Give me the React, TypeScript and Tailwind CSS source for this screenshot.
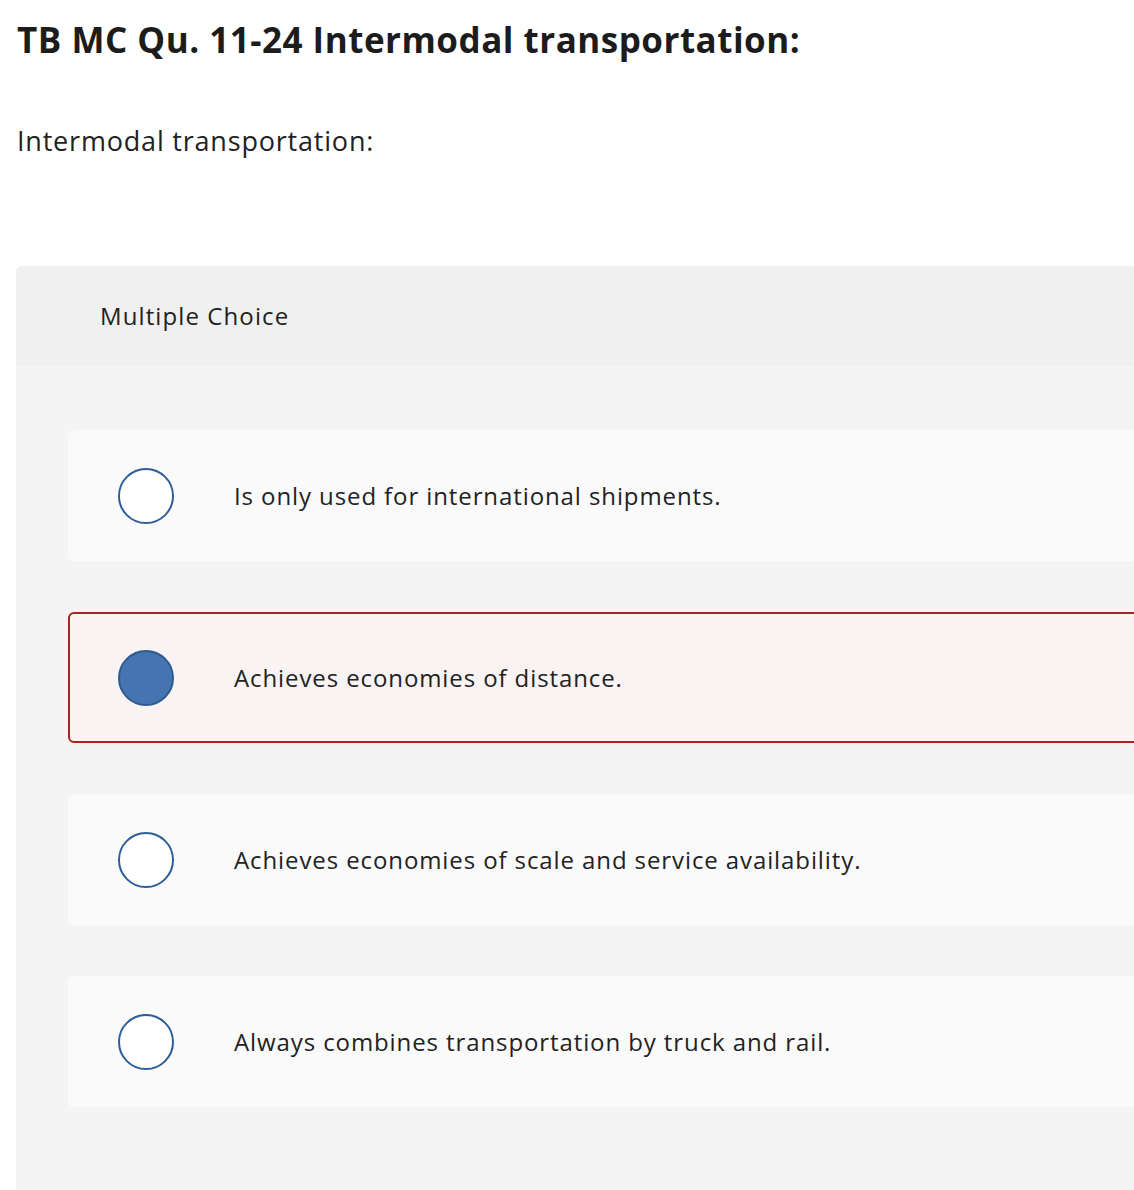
import React from "react"

const options = [
  { text: "Is only used for international shipments.", selected: false },
  { text: "Achieves economies of distance.", selected: true },
  { text: "Achieves economies of scale and service availability.", selected: false },
  { text: "Always combines transportation by truck and rail.", selected: false },
]

function Radio({ selected }: { selected: boolean }) {
  return (
    <span
      className={`block w-[56px] h-[56px] shrink-0 rounded-full border-2 ${
        selected ? "bg-[#4674b0] border-[#2f5a8f]" : "bg-white border-[#2f5e97]"
      }`}
    />
  )
}

export default function App() {
  return (
    <div className="w-full h-[1190px] overflow-hidden bg-white text-[#222] font-['Open_Sans','Liberation_Sans',sans-serif]">
      <h1 className="pl-[17px] pt-[18px] text-[35px] leading-[44px] font-bold text-[#1c1c1c] tracking-[0.5px]">
        TB MC Qu. 11-24 Intermodal transportation:
      </h1>
      <p className="pl-[17px] mt-[61px] text-[27px] leading-[36px] tracking-[0.8px]">Intermodal transportation:</p>

      <div className="ml-[16px] mt-[107px] w-[1160px] rounded-tl-md bg-[#f4f4f4] pb-[90px]">
        <div className="h-[100px] flex items-center pl-[84px] bg-[#f0f0f0] rounded-tl-md text-[24px] tracking-[1.1px]">
          Multiple Choice
        </div>
        <div className="pt-[64px] pl-[52px] flex flex-col gap-[51px]">
          {options.map((o) => (
            <div
              key={o.text}
              className={
                o.selected
                  ? "h-[131px] flex items-center pl-[48px] rounded-md bg-[#f9f3f3] border-2 border-[#a8241f]"
                  : "h-[131px] flex items-center pl-[50px] rounded-md bg-[#fafafa]"
              }
            >
              <Radio selected={o.selected} />
              <span className="ml-[60px] text-[24px] leading-[32px] tracking-[0.9px]">{o.text}</span>
            </div>
          ))}
        </div>
      </div>
    </div>
  )
}
